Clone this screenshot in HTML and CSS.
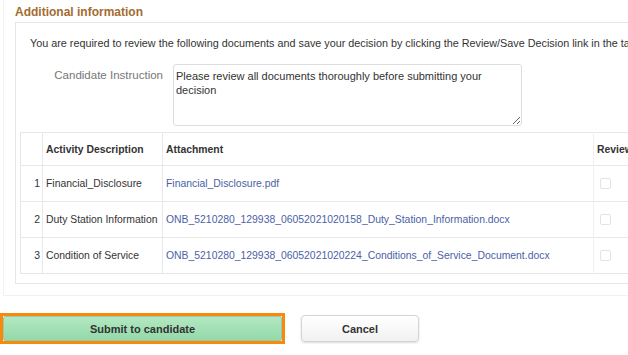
FILE: index.html
```html
<!DOCTYPE html>
<html>
<head>
    <meta charset="UTF-8">
    <title>Additional information</title>
    <link rel="stylesheet" href="styles.css">
</head>
<body>
    <div class="page">
        <div class="section">
            <h2 class="section-title">Additional information</h2>
            <div class="panel">
                <p class="intro">You are required to review the following documents and save your decision by clicking the Review/Save Decision link in the table below.</p>

                <div class="field-row">
                    <label class="field-label">Candidate Instruction</label>
                    <textarea class="instruction" readonly>Please review all documents thoroughly before submitting your decision</textarea>
                </div>

                <table class="docs">
                    <colgroup>
                        <col class="col-num">
                        <col class="col-activity">
                        <col class="col-attachment">
                        <col>
                    </colgroup>
                    <tr>
                        <th class="num"></th>
                        <th>Activity Description</th>
                        <th>Attachment</th>
                        <th>Reviewed</th>
                    </tr>
                    <tr>
                        <td class="num">1</td>
                        <td>Financial_Disclosure</td>
                        <td><a href="#">Financial_Disclosure.pdf</a></td>
                        <td class="review"><span class="box"></span></td>
                    </tr>
                    <tr>
                        <td class="num">2</td>
                        <td>Duty Station Information</td>
                        <td><a href="#">ONB_5210280_129938_06052021020158_Duty_Station_Information.docx</a></td>
                        <td class="review"><span class="box"></span></td>
                    </tr>
                    <tr>
                        <td class="num">3</td>
                        <td>Condition of Service</td>
                        <td><a href="#">ONB_5210280_129938_06052021020224_Conditions_of_Service_Document.docx</a></td>
                        <td class="review"><span class="box"></span></td>
                    </tr>
                </table>
            </div>
        </div>

        <div class="actions">
            <div class="focus-ring">
                <button class="btn btn-submit">Submit to candidate</button>
            </div>
            <button class="btn btn-cancel">Cancel</button>
        </div>
    </div>
</body>
</html>
```

FILE: styles.css
```css
body {
    margin: 0;
    padding: 0;
    background-color: #fff;
    font-family: "Liberation Sans", Arial, sans-serif;
    color: #333;
    overflow: hidden;
}

.page {
    width: 720px;
}

.section {
    margin-left: 3px;
    padding: 6px 0 11px 11px;
    border-left: 1px solid #f2f2f2;
    border-bottom: 1px solid #f2f2f2;
}

.section-title {
    margin: 0 0 3px 0;
    font-size: 12px;
    font-weight: bold;
    color: #a36c30;
    line-height: 13px;
}

.panel {
    border: 1px solid #e6e6e6;
    border-right: none;
    padding: 13px 0 9px 4px;
}

.intro {
    margin: 0 0 14px 10px;
    font-size: 10.8px;
    line-height: 14px;
    color: #333;
    white-space: nowrap;
}

.field-row {
    display: flex;
    align-items: flex-start;
    margin-bottom: 6px;
}

.field-label {
    width: 143px;
    text-align: right;
    padding-top: 5px;
    margin-right: 10px;
    font-size: 11.5px;
    color: #777;
}

.instruction {
    width: 343px;
    height: 52px;
    padding: 4px 2px;
    margin: 0;
    border: 1px solid #ddd;
    border-radius: 3px;
    font-family: "Liberation Sans", Arial, sans-serif;
    font-size: 11px;
    line-height: 14px;
    color: #333;
    resize: both;
}

.docs {
    border-collapse: collapse;
    table-layout: fixed;
    font-size: 10.4px;
    width: 700px;
    border: 1px solid #e6e6e6;
}

.col-num {
    width: 22px;
}

.col-activity {
    width: 120px;
}

.col-attachment {
    width: 431px;
}

.docs th,
.docs td {
    border-top: 1px solid #e8e8e8;
    text-align: left;
    padding: 0 3px;
    white-space: nowrap;
    overflow: hidden;
}

.docs th {
    height: 32px;
    font-weight: bold;
    color: #333;
}

.docs td {
    height: 35px;
    color: #333;
}

.docs .num {
    text-align: right;
    border-right: 1px solid #e8e8e8;
    padding: 0 2px 0 3px;
}

.docs td:nth-child(2),
.docs th:nth-child(2) {
    border-right: 1px solid #e8e8e8;
}

.docs th:nth-child(3),
.docs td:nth-child(3) {
    border-right: 1px solid #f0f0f0;
}

.docs a {
    color: #4b5fa6;
    text-decoration: none;
}

.docs .review {
    padding-left: 6px;
}

.box {
    display: inline-block;
    width: 9px;
    height: 9px;
    border: 1px solid #e3e3e3;
    border-radius: 2px;
    vertical-align: middle;
}

.actions {
    display: flex;
    align-items: center;
    margin-top: 17px;
}

.focus-ring {
    border: 3px solid #f7890f;
    padding: 0;
    margin-right: 16px;
}

.btn {
    font-family: "Liberation Sans", Arial, sans-serif;
    font-size: 11px;
    font-weight: bold;
    color: #333;
    cursor: pointer;
}

.btn-submit {
    display: block;
    width: 279px;
    height: 25px;
    border: 1px solid #9bc8a8;
    border-radius: 2px;
    background: linear-gradient(#b3e8c2, #93d9a8);
}

.btn-cancel {
    width: 118px;
    height: 27px;
    border: 1px solid #d4d4d4;
    border-radius: 4px;
    background: linear-gradient(#fff, #f1f1f1);
    box-shadow: 0 1px 2px rgba(0, 0, 0, 0.15);
}
```
